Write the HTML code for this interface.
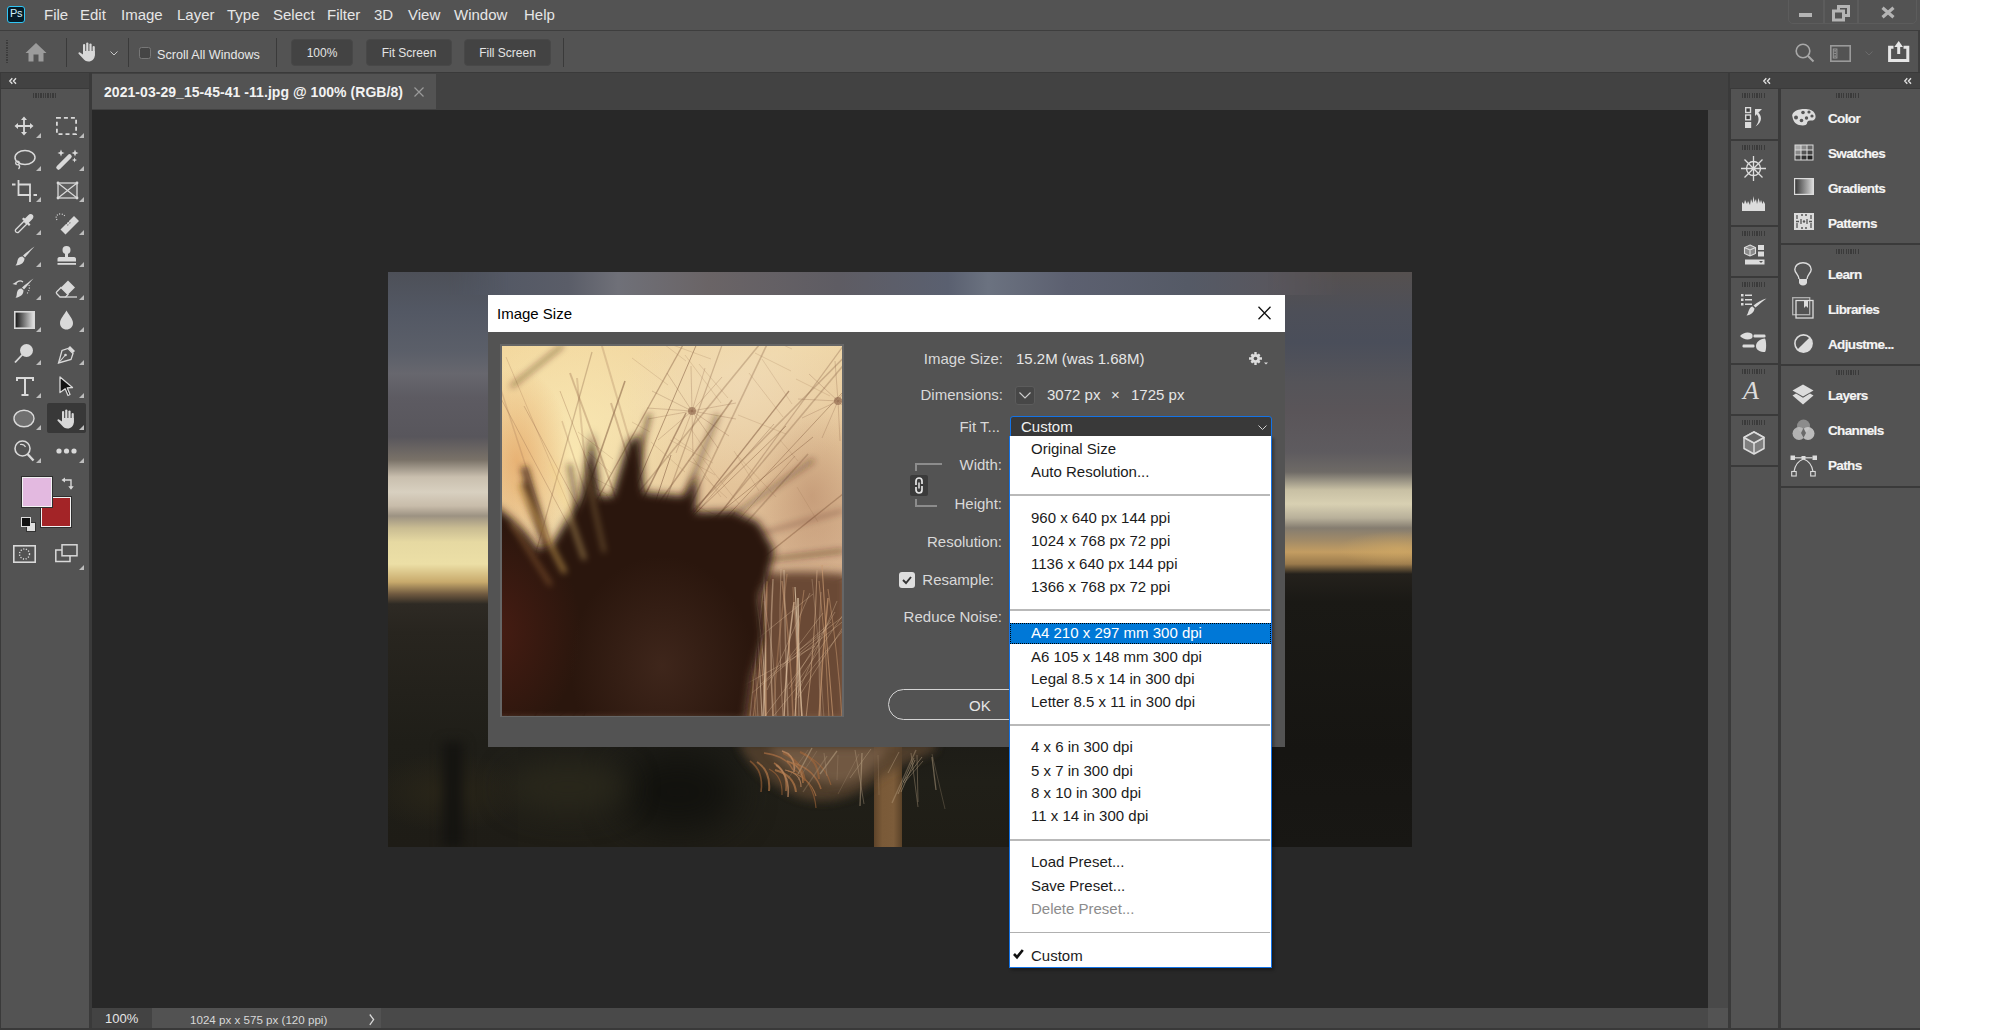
<!DOCTYPE html>
<html><head><meta charset="utf-8">
<style>
*{margin:0;padding:0;box-sizing:border-box}
html,body{width:2000px;height:1030px;overflow:hidden;background:#fff;font-family:"Liberation Sans",sans-serif}
.a{position:absolute}
#app{position:absolute;left:0;top:0;width:1920px;height:1030px;background:#535353;overflow:hidden}
.mi{position:absolute;top:6px;font-size:15px;color:#e6e6e6;line-height:18px}
.sep{position:absolute;width:1px;background:#3a3a3a}
.btn{position:absolute;top:39px;height:27px;border:1px solid #3b3b3b;border-radius:4px;background:#434343;color:#e4e4e4;font-size:12px;line-height:23px;padding-top:1.5px;text-align:center;border-color:#484848}
.grip{position:absolute;height:5px;background:repeating-linear-gradient(90deg,#3a3a3a 0 1.3px,transparent 1.3px 2.4px)}
svg{position:absolute;overflow:visible}
.pl{position:absolute;font-size:13.5px;font-weight:bold;color:#f4f4f4;line-height:16px;letter-spacing:-0.65px;margin-top:0.6px;-webkit-text-stroke:0.15px #f4f4f4}
.dl{position:absolute;font-size:15px;color:#dcdcdc;line-height:18px;text-align:right}
.li{position:absolute;left:21px;font-size:15px;color:#1a1a1a;line-height:18px}
.hr{position:absolute;left:0;width:259px;height:3px;background:#c6c6c6}
</style></head><body>
<svg width="0" height="0" style="position:absolute"><defs>
<g id="hand"><rect x="5" y="2" width="2.2" height="11" rx="1.1" fill="#d8d8d8"/><rect x="8.2" y="0.5" width="2.2" height="12" rx="1.1" fill="#d8d8d8"/><rect x="11.4" y="1.5" width="2.2" height="11" rx="1.1" fill="#d8d8d8"/><rect x="14.6" y="4" width="2.2" height="10" rx="1.1" fill="#d8d8d8"/><path d="M5 9 H16.8 V13 C16.8 17 14 19.5 10.5 19.5 C8 19.5 6.5 18.3 5 16.5 L0.6 11.8 C0 11 1 9.8 2 10.5 L5 12.5 Z" fill="#d8d8d8"/></g>
</defs></svg>
<div id="app">
<!-- menubar -->
<div class="a" style="left:0;top:0;width:1920px;height:30px;background:#535353"></div>
<div class="a" style="left:0;top:30px;width:1920px;height:1px;background:#3e3e3e"></div>
<div class="a" style="left:7px;top:5.5px;width:18px;height:17px;border:1.8px solid #30c6f6;border-radius:3px;background:#061c28;color:#d2f0fc;font-size:11px;line-height:13px;text-align:center;letter-spacing:-0.3px">Ps</div>
<div class="mi" style="left:44px">File</div>
<div class="mi" style="left:80px">Edit</div>
<div class="mi" style="left:121px">Image</div>
<div class="mi" style="left:177px">Layer</div>
<div class="mi" style="left:227px">Type</div>
<div class="mi" style="left:273px">Select</div>
<div class="mi" style="left:327px">Filter</div>
<div class="mi" style="left:374px">3D</div>
<div class="mi" style="left:408px">View</div>
<div class="mi" style="left:454px">Window</div>
<div class="mi" style="left:524px">Help</div>

<!-- options bar -->
<div class="a" style="left:6px;top:40px;width:2px;height:24px;background:repeating-linear-gradient(180deg,#3c3c3c 0 1.4px,transparent 1.4px 2.4px)"></div>
<svg style="left:25px;top:43px" width="22" height="20" viewBox="0 0 22 20"><path d="M11 0 L21.5 10 L18.5 10 L18.5 18.5 L13.5 18.5 L13.5 11.5 L8.5 11.5 L8.5 18.5 L3.5 18.5 L3.5 10 L0.5 10 Z" fill="#9b9b9b"/></svg>
<div class="sep" style="left:66px;top:48px;height:29px;top:38px"></div>
<svg style="left:78px;top:42px" width="19" height="20" viewBox="0 0 19 20"><use href="#hand"/></svg>
<svg style="left:110px;top:51px" width="8" height="5" viewBox="0 0 8 5"><path d="M0.5 0.5 L4 4 L7.5 0.5" stroke="#c8c8c8" stroke-width="1" fill="none"/></svg>
<div class="sep" style="left:128px;top:38px;height:29px"></div>
<div class="a" style="left:139px;top:47px;width:12px;height:12px;border:1px solid #777;border-radius:2.5px;background:#454545"></div>
<div class="a" style="left:157px;top:46.5px;font-size:12.6px;color:#e8e8e8;line-height:16px">Scroll All Windows</div>
<div class="sep" style="left:276px;top:38px;height:29px"></div>
<div class="btn" style="left:291px;width:62px">100%</div>
<div class="btn" style="left:366px;width:86px">Fit Screen</div>
<div class="btn" style="left:464px;width:87px">Fill Screen</div>
<div class="sep" style="left:563px;top:38px;height:29px"></div>
<svg style="left:1795px;top:43px" width="20" height="20" viewBox="0 0 20 20"><circle cx="8" cy="8" r="6.8" stroke="#a8a8a8" stroke-width="1.6" fill="none"/><path d="M13 13 L18.5 18.5" stroke="#a8a8a8" stroke-width="2"/></svg>
<svg style="left:1830px;top:45px" width="21" height="17" viewBox="0 0 21 17"><rect x="0.8" y="0.8" width="19.4" height="15.4" stroke="#9a9a9a" stroke-width="1.6" fill="none"/><rect x="3.3" y="4" width="3.6" height="9" stroke="#9a9a9a" stroke-width="1" fill="none"/><rect x="4.3" y="5.2" width="1.6" height="1.4" fill="#9a9a9a"/><rect x="4.3" y="7.8" width="1.6" height="1.4" fill="#9a9a9a"/><rect x="4.3" y="10.4" width="1.6" height="1.4" fill="#9a9a9a"/></svg>
<svg style="left:1865px;top:51px" width="8" height="5" viewBox="0 0 8 5"><path d="M0.5 0.5 L4 4 L7.5 0.5" stroke="#6a6a6a" stroke-width="1" fill="none"/></svg>
<svg style="left:1888px;top:40px" width="22" height="23" viewBox="0 0 22 23"><path d="M5.5 7.3 H1.6 V20.6 H19.8 V7.3 H15.5" stroke="#e6e6e6" stroke-width="3" fill="none"/><path d="M10.7 6 V14" stroke="#e6e6e6" stroke-width="3"/><path d="M6.3 7 L10.7 1 L15 7 Z" fill="#e6e6e6"/></svg>
<div class="a" style="left:1918px;top:31px;width:2px;height:42px;background:#3e3e3e"></div>
<!-- window controls -->
<div class="a" style="left:1788px;top:-3px;width:129px;height:26.5px;border:1.5px solid #5c5c5c;border-radius:0 0 5px 5px"></div>
<div class="a" style="left:1823px;top:0;width:1.5px;height:23px;background:#5c5c5c"></div>
<div class="a" style="left:1857px;top:0;width:1.5px;height:23px;background:#5c5c5c"></div>
<div class="a" style="left:1799px;top:13px;width:13px;height:4px;background:#b4b4b4"></div>
<svg style="left:1832px;top:5px" width="19" height="16" viewBox="0 0 19 16"><rect x="6.5" y="1.5" width="10" height="9" stroke="#b4b4b4" stroke-width="3" fill="none"/><rect x="1.5" y="6" width="10" height="9" stroke="#b4b4b4" stroke-width="3" fill="#535353"/></svg>
<svg style="left:1881px;top:7px" width="14" height="11" viewBox="0 0 14 11"><path d="M1.5 0.8 L12.5 10.2 M12.5 0.8 L1.5 10.2" stroke="#b4b4b4" stroke-width="3.2"/></svg>

<div class="a" style="left:0;top:72px;width:1920px;height:1px;background:#3a3a3a"></div>

<!-- left toolbar -->
<div class="a" style="left:0;top:73px;width:92px;height:957px;background:#3a3a3a"></div>
<div class="a" style="left:1px;top:73px;width:88px;height:15px;background:#424242"></div>
<div class="a" style="left:1px;top:89px;width:88px;height:941px;background:#535353"></div>


<svg style="left:9px;top:77.5px" width="9" height="6" viewBox="0 0 9 6"><path d="M3.3 0.3 L0.8 3 L3.3 5.7 M7 0.3 L4.5 3 L7 5.7" stroke="#e0e0e0" stroke-width="1.4" fill="none"/></svg>
<div class="grip" style="left:33px;top:93px;width:24px;height:5px"></div>
<!-- row1 move -->
<svg style="left:14px;top:116px" width="20" height="20" viewBox="0 0 20 20"><path d="M10 2 V18 M2 10 H18" stroke="#d9d9d9" stroke-width="1.8"/><path d="M10 0.5 L13 4 H7 Z M10 19.5 L13 16 H7 Z M0.5 10 L4 7 V13 Z M19.5 10 L16 7 V13 Z" fill="#d9d9d9"/></svg>
<svg style="left:56px;top:117px" width="21" height="18" viewBox="0 0 21 18"><rect x="0.9" y="0.9" width="19.2" height="16.2" stroke="#d9d9d9" stroke-width="1.8" fill="none" stroke-dasharray="4 3"/></svg>
<!-- row2 lasso / wand -->
<svg style="left:14px;top:149px" width="22" height="22" viewBox="0 0 22 22"><ellipse cx="11" cy="8.5" rx="10" ry="7" stroke="#d9d9d9" stroke-width="1.5" fill="none"/><circle cx="3.5" cy="14" r="1.8" stroke="#d9d9d9" stroke-width="1.3" fill="none"/><path d="M4.5 15.5 C6 17 5.5 19 4.5 20" stroke="#d9d9d9" stroke-width="1.3" fill="none"/></svg>
<svg style="left:56px;top:148px" width="24" height="22" viewBox="0 0 24 22"><path d="M2.5 19.5 L13.5 8.5" stroke="#d9d9d9" stroke-width="4.5" stroke-linecap="round"/><path d="M5 1.5 L6 4 L8.5 5 L6 6 L5 8.5 L4 6 L1.5 5 L4 4 Z M19 1.5 L20 4 L22.5 5 L20 6 L19 8.5 L18 6 L15.5 5 L18 4 Z M18.5 9.5 L19.2 11.3 L21 12 L19.2 12.7 L18.5 14.5 L17.8 12.7 L16 12 L17.8 11.3 Z" fill="#d9d9d9"/></svg>
<!-- row3 crop / frame -->
<svg style="left:12px;top:180px" width="25" height="22" viewBox="0 0 25 22"><path d="M6.5 0 V15 H19 M0 4.5 H3.5 M6.5 4.5 H18 V22 M21.5 15 H25" stroke="#d9d9d9" stroke-width="1.8" fill="none"/></svg>
<svg style="left:56px;top:181px" width="23" height="19" viewBox="0 0 23 19"><rect x="2" y="2" width="19" height="15" stroke="#d9d9d9" stroke-width="1.3" fill="#5e5e5e"/><path d="M2 2 L21 17 M21 2 L2 17" stroke="#d9d9d9" stroke-width="1.2"/><circle cx="2" cy="2" r="1.4" fill="#d9d9d9"/><circle cx="21" cy="2" r="1.4" fill="#d9d9d9"/><circle cx="2" cy="17" r="1.4" fill="#d9d9d9"/><circle cx="21" cy="17" r="1.4" fill="#d9d9d9"/></svg>
<!-- row4 eyedropper / healing -->
<svg style="left:14px;top:213px" width="21" height="21" viewBox="0 0 21 21"><path d="M2 19 C1 18 1.2 17 2 16.2 L10 8.2 L12.8 11 L4.8 19 C4 19.8 3 19.8 2 19 Z" stroke="#d9d9d9" stroke-width="1.3" fill="none"/><path d="M8 6 L15 13 L16.5 11.5 L14.8 9.8 L18 6.6 C19.8 4.8 19.8 2.8 18.6 1.8 C17.4 0.6 15.6 0.8 14 2.4 L11 5.4 L9.5 4.5 Z" fill="#d9d9d9"/></svg>
<svg style="left:55px;top:213px" width="24" height="21" viewBox="0 0 24 21"><path d="M8 19 L21.5 5.5" stroke="#d9d9d9" stroke-width="7"/><path d="M11 10 L14 13 M13 8 L16 11 M12 7.5 h0" stroke="#555" stroke-width="1.2" stroke-dasharray="1 1.2"/><path d="M2 7 C0 4 2 0.5 6 1 C8 1.2 9 2 10 3" stroke="#d9d9d9" stroke-width="1.2" fill="none" stroke-dasharray="1 1.5"/></svg>
<!-- row5 brush / stamp -->
<svg style="left:15px;top:246px" width="20" height="20" viewBox="0 0 20 20"><path d="M19.5 0.5 C17 3 13 8 10 11.5 L8 9.5 C11.5 6.5 16.5 2.5 19.5 0.5 Z" fill="#d9d9d9"/><path d="M7.5 10.5 L9.5 12.5 C9.5 16 7 19 0.5 19.5 C2 18 2 16.5 2.5 14.5 C3 12 5 10.5 7.5 10.5 Z" fill="#d9d9d9"/></svg>
<svg style="left:57px;top:246px" width="20" height="20" viewBox="0 0 20 20"><circle cx="9.5" cy="4" r="4" fill="#d9d9d9"/><path d="M8 6 H11 V11 H17 C18.5 11 19 12 19 13 V15.5 H0.5 V13 C0.5 12 1 11 2.5 11 H8 Z" fill="#d9d9d9"/><rect x="0.5" y="17" width="18.5" height="1.8" fill="#d9d9d9"/></svg>
<!-- row6 history brush / eraser -->
<svg style="left:12px;top:278px" width="22" height="21" viewBox="0 0 22 21"><path d="M21.5 0.5 C19 3 15 8 12 11.5 L10 9.5 C13.5 6.5 18.5 2.5 21.5 0.5 Z" fill="#d9d9d9"/><path d="M9.5 10.5 L11.5 12.5 C11.5 16 9 19 3.5 19.8 C5 18 4.5 16.5 5 14.5 C5.5 12 7 10.5 9.5 10.5 Z" fill="#d9d9d9"/><path d="M0.5 6 L5 3.5 L4.5 7 Z" fill="#d9d9d9"/><path d="M4 5 C6 3 9 2.5 11 4" stroke="#d9d9d9" stroke-width="1.2" fill="none"/><path d="M17 7 C18 10 17 14 14 16.5" stroke="#d9d9d9" stroke-width="1.2" fill="none" stroke-dasharray="1 1.6"/></svg>
<svg style="left:56px;top:280px" width="22" height="19" viewBox="0 0 22 19"><path d="M12 0.5 L19 7.5 L12 14.5 L5 7.5 Z" fill="#d9d9d9"/><path d="M5 7.5 L12 14.5 L9.5 17 H4 L0.8 13.8 C0.2 13.2 0.2 12.3 0.8 11.7 Z" stroke="#d9d9d9" stroke-width="1.3" fill="none"/><path d="M9.5 17 H21" stroke="#d9d9d9" stroke-width="1.3"/></svg>
<!-- row7 gradient / drop -->
<svg style="left:14px;top:311px" width="21" height="18" viewBox="0 0 21 18"><defs><linearGradient id="gg" x1="0" x2="1"><stop offset="0" stop-color="#111"/><stop offset="1" stop-color="#e8e8e8"/></linearGradient></defs><rect x="0.8" y="0.8" width="19.4" height="16.4" fill="url(#gg)" stroke="#d9d9d9" stroke-width="1.6"/></svg>
<svg style="left:59px;top:310px" width="15" height="20" viewBox="0 0 15 20"><path d="M7.5 0.5 C9 4 14 8.5 14 13 C14 17 11 19.5 7.5 19.5 C4 19.5 1 17 1 13 C1 8.5 6 4 7.5 0.5 Z" fill="#d9d9d9"/></svg>
<!-- row8 dodge / pen -->
<svg style="left:14px;top:344px" width="20" height="20" viewBox="0 0 20 20"><circle cx="12.5" cy="6.5" r="6.5" fill="#d9d9d9"/><path d="M8.5 10.5 L1 18.5" stroke="#d9d9d9" stroke-width="1.8"/></svg>
<svg style="left:57px;top:345px" width="19" height="19" viewBox="0 0 19 19"><path d="M13 1 L18 6 L16 8 L11 3 Z" fill="#d9d9d9"/><path d="M11 3.5 L16 8.5 L14 14.5 L1.5 18 L5 5.5 Z" stroke="#d9d9d9" stroke-width="1.3" fill="none"/><path d="M1.5 18 L8 10.5" stroke="#d9d9d9" stroke-width="1.1"/><circle cx="8.5" cy="10" r="1.3" fill="#d9d9d9"/></svg>
<!-- row9 type / path select -->
<svg style="left:16px;top:377px" width="18" height="19" viewBox="0 0 18 19"><path d="M1 4 V1 H17 V4 M9 1 V18 M5.5 18 H12.5" stroke="#d9d9d9" stroke-width="2" fill="none"/></svg>
<svg style="left:59px;top:376px" width="15" height="21" viewBox="0 0 15 21"><path d="M1 1 L13.5 11.5 L8.2 11.8 L11 18.5 L9 19.5 L6.2 12.8 L1 16.5 Z" fill="#111" stroke="#d9d9d9" stroke-width="1.3" stroke-linejoin="round"/></svg>
<!-- row10 ellipse / hand -->
<svg style="left:13px;top:409px" width="22" height="19" viewBox="0 0 22 19"><ellipse cx="11" cy="9.5" rx="10" ry="8.3" fill="#707070" stroke="#d9d9d9" stroke-width="1.4"/></svg>
<div class="a" style="left:47px;top:403px;width:39px;height:30px;background:#383838;border-radius:2px"></div>
<svg style="left:57px;top:409px" width="19" height="20" viewBox="0 0 19 20"><use href="#hand"/></svg>
<!-- row11 zoom / more -->
<svg style="left:14px;top:440px" width="21" height="22" viewBox="0 0 21 22"><circle cx="8.5" cy="8.5" r="7.5" stroke="#d9d9d9" stroke-width="1.6" fill="none"/><path d="M6 4.5 C8 4 10.5 5 11.5 7" stroke="#d9d9d9" stroke-width="1.2" fill="none"/><path d="M13.5 14 L19.5 20.5" stroke="#d9d9d9" stroke-width="2.4"/></svg>
<svg style="left:56px;top:448px" width="21" height="6" viewBox="0 0 21 6"><circle cx="3" cy="3" r="2.6" fill="#d9d9d9"/><circle cx="10.5" cy="3" r="2.6" fill="#d9d9d9"/><circle cx="18" cy="3" r="2.6" fill="#d9d9d9"/></svg>
<!-- colors -->
<div class="a" style="left:41px;top:497px;width:30px;height:30px;background:#a32427;border:1px solid #f2f2f2;outline:1px solid #2e2e2e"></div>
<div class="a" style="left:22px;top:477px;width:30px;height:30px;background:#e3b9e0;border:1px solid #f2f2f2;outline:1px solid #2e2e2e"></div>
<svg style="left:61px;top:477px" width="14" height="13" viewBox="0 0 14 13"><path d="M3 3 H10 V11" stroke="#d9d9d9" stroke-width="1.4" fill="none"/><path d="M0.5 3 L4 0.5 V5.5 Z M10 12.8 L7.3 9.3 H12.7 Z" fill="#d9d9d9"/></svg>
<div class="a" style="left:27px;top:523px;width:8px;height:8px;background:#dedede;outline:1px solid #333"></div>
<div class="a" style="left:22px;top:518px;width:8px;height:8px;background:#111;outline:1px solid #ddd"></div>
<svg style="left:13px;top:545px" width="23" height="18" viewBox="0 0 23 18"><rect x="0.8" y="0.8" width="21.4" height="16.4" stroke="#d9d9d9" stroke-width="1.6" fill="none"/><circle cx="11.5" cy="9" r="5" stroke="#d9d9d9" stroke-width="1.4" fill="none" stroke-dasharray="1.2 1.5"/></svg>
<svg style="left:55px;top:544px" width="23" height="19" viewBox="0 0 23 19"><rect x="7" y="0.8" width="15" height="11" stroke="#d9d9d9" stroke-width="1.5" fill="none"/><path d="M7 6 H0.8 V17.5 H15 V11.8" stroke="#d9d9d9" stroke-width="1.5" fill="none"/></svg>
<svg style="left:36px;top:133px" width="5" height="5" viewBox="0 0 5 5"><path d="M5 0 V5 H0 Z" fill="#bdbdbd"/></svg><svg style="left:36px;top:166px" width="5" height="5" viewBox="0 0 5 5"><path d="M5 0 V5 H0 Z" fill="#bdbdbd"/></svg><svg style="left:36px;top:197px" width="5" height="5" viewBox="0 0 5 5"><path d="M5 0 V5 H0 Z" fill="#bdbdbd"/></svg><svg style="left:36px;top:230px" width="5" height="5" viewBox="0 0 5 5"><path d="M5 0 V5 H0 Z" fill="#bdbdbd"/></svg><svg style="left:36px;top:262px" width="5" height="5" viewBox="0 0 5 5"><path d="M5 0 V5 H0 Z" fill="#bdbdbd"/></svg><svg style="left:36px;top:295px" width="5" height="5" viewBox="0 0 5 5"><path d="M5 0 V5 H0 Z" fill="#bdbdbd"/></svg><svg style="left:36px;top:327px" width="5" height="5" viewBox="0 0 5 5"><path d="M5 0 V5 H0 Z" fill="#bdbdbd"/></svg><svg style="left:36px;top:360px" width="5" height="5" viewBox="0 0 5 5"><path d="M5 0 V5 H0 Z" fill="#bdbdbd"/></svg><svg style="left:36px;top:393px" width="5" height="5" viewBox="0 0 5 5"><path d="M5 0 V5 H0 Z" fill="#bdbdbd"/></svg><svg style="left:36px;top:425px" width="5" height="5" viewBox="0 0 5 5"><path d="M5 0 V5 H0 Z" fill="#bdbdbd"/></svg><svg style="left:36px;top:458px" width="5" height="5" viewBox="0 0 5 5"><path d="M5 0 V5 H0 Z" fill="#bdbdbd"/></svg><svg style="left:79px;top:133px" width="5" height="5" viewBox="0 0 5 5"><path d="M5 0 V5 H0 Z" fill="#bdbdbd"/></svg><svg style="left:79px;top:166px" width="5" height="5" viewBox="0 0 5 5"><path d="M5 0 V5 H0 Z" fill="#bdbdbd"/></svg><svg style="left:79px;top:197px" width="5" height="5" viewBox="0 0 5 5"><path d="M5 0 V5 H0 Z" fill="#bdbdbd"/></svg><svg style="left:79px;top:230px" width="5" height="5" viewBox="0 0 5 5"><path d="M5 0 V5 H0 Z" fill="#bdbdbd"/></svg><svg style="left:79px;top:262px" width="5" height="5" viewBox="0 0 5 5"><path d="M5 0 V5 H0 Z" fill="#bdbdbd"/></svg><svg style="left:79px;top:295px" width="5" height="5" viewBox="0 0 5 5"><path d="M5 0 V5 H0 Z" fill="#bdbdbd"/></svg><svg style="left:79px;top:327px" width="5" height="5" viewBox="0 0 5 5"><path d="M5 0 V5 H0 Z" fill="#bdbdbd"/></svg><svg style="left:79px;top:360px" width="5" height="5" viewBox="0 0 5 5"><path d="M5 0 V5 H0 Z" fill="#bdbdbd"/></svg><svg style="left:79px;top:393px" width="5" height="5" viewBox="0 0 5 5"><path d="M5 0 V5 H0 Z" fill="#bdbdbd"/></svg><svg style="left:79px;top:425px" width="5" height="5" viewBox="0 0 5 5"><path d="M5 0 V5 H0 Z" fill="#bdbdbd"/></svg><svg style="left:79px;top:458px" width="5" height="5" viewBox="0 0 5 5"><path d="M5 0 V5 H0 Z" fill="#bdbdbd"/></svg><svg style="left:79px;top:565px" width="5" height="5" viewBox="0 0 5 5"><path d="M5 0 V5 H0 Z" fill="#bdbdbd"/></svg>
<!-- document area -->
<div class="a" style="left:92px;top:73px;width:1636px;height:37px;background:#424242"></div>
<div class="a" style="left:92px;top:74px;width:344px;height:35px;background:#535353"></div>
<div class="a" style="left:92px;top:110px;width:1616px;height:898px;background:#282828"></div>
<div class="a" style="left:1708px;top:110px;width:20px;height:920px;background:#494949"></div>
<div class="a" style="left:92px;top:1008px;width:1616px;height:22px;background:#494949"></div><div class="a" style="left:1708px;top:1008px;width:20px;height:20px;background:#535353"></div>


<div class="a" style="left:104px;top:84px;font-size:14px;font-weight:bold;color:#f2f2f2;line-height:17px;letter-spacing:0.05px">2021-03-29_15-45-41 -11.jpg @ 100% (RGB/8)</div>
<svg style="left:414px;top:87px" width="10" height="10" viewBox="0 0 10 10"><path d="M0.5 0.5 L9.5 9.5 M9.5 0.5 L0.5 9.5" stroke="#9a9a9a" stroke-width="1.2"/></svg>
<div class="a" style="left:92px;top:1008px;width:60px;height:20px;background:#434343"></div>
<div class="a" style="left:105px;top:1010.5px;font-size:13px;color:#e6e6e6;line-height:16px">100%</div>
<div class="a" style="left:152px;top:1008px;width:229px;height:20px;background:#525252"></div>
<div class="a" style="left:190px;top:1012px;font-size:11.6px;color:#d8d8d8;line-height:15px">1024 px x 575 px (120 ppi)</div>
<svg style="left:369px;top:1014px" width="6" height="12" viewBox="0 0 6 12"><path d="M0.8 0.5 L4.6 5.6 L0.8 10.8" stroke="#d8d8d8" stroke-width="1.3" fill="none"/></svg>

<!-- right dock -->
<div class="a" style="left:1728px;top:73px;width:192px;height:957px;background:#3a3a3a"></div>
<div class="a" style="left:1730px;top:73px;width:190px;height:15px;background:#424242"></div>
<div class="a" style="left:1731px;top:89px;width:47px;height:941px;background:#535353"></div>
<div class="a" style="left:1781px;top:89px;width:139px;height:941px;background:#535353"></div>


<svg style="left:1763px;top:77.5px" width="9" height="6" viewBox="0 0 9 6"><path d="M3.3 0.3 L0.8 3 L3.3 5.7 M7 0.3 L4.5 3 L7 5.7" stroke="#e0e0e0" stroke-width="1.4" fill="none"/></svg>
<svg style="left:1904px;top:77.5px" width="9" height="6" viewBox="0 0 9 6"><path d="M3.3 0.3 L0.8 3 L3.3 5.7 M7 0.3 L4.5 3 L7 5.7" stroke="#e0e0e0" stroke-width="1.4" fill="none"/></svg>
<!-- icon column separators -->
<div class="a" style="left:1731px;top:139px;width:47px;height:2px;background:#3a3a3a"></div>
<div class="a" style="left:1731px;top:225px;width:47px;height:2px;background:#3a3a3a"></div>
<div class="a" style="left:1731px;top:276px;width:47px;height:2px;background:#3a3a3a"></div>
<div class="a" style="left:1731px;top:363px;width:47px;height:2px;background:#3a3a3a"></div>
<div class="a" style="left:1731px;top:414px;width:47px;height:2px;background:#3a3a3a"></div>
<div class="a" style="left:1731px;top:465px;width:47px;height:2px;background:#3a3a3a"></div>
<div class="grip" style="left:1742px;top:93px;width:24px;height:5px"></div>
<div class="grip" style="left:1742px;top:145px;width:24px;height:5px"></div>
<div class="grip" style="left:1742px;top:231px;width:24px;height:5px"></div>
<div class="grip" style="left:1742px;top:282px;width:24px;height:5px"></div>
<div class="grip" style="left:1742px;top:369px;width:24px;height:5px"></div>
<div class="grip" style="left:1742px;top:420px;width:24px;height:5px"></div>
<!-- wide panel separators -->
<div class="a" style="left:1781px;top:243px;width:139px;height:2px;background:#3a3a3a"></div>
<div class="a" style="left:1781px;top:364px;width:139px;height:2px;background:#3a3a3a"></div>
<div class="a" style="left:1781px;top:486px;width:139px;height:2px;background:#3a3a3a"></div>
<div class="grip" style="left:1836px;top:93px;width:24px;height:5px"></div>
<div class="grip" style="left:1836px;top:249px;width:24px;height:5px"></div>
<div class="grip" style="left:1836px;top:370px;width:24px;height:5px"></div>
<div class="pl" style="left:1828px;top:110px">Color</div>
<div class="pl" style="left:1828px;top:145px">Swatches</div>
<div class="pl" style="left:1828px;top:180px">Gradients</div>
<div class="pl" style="left:1828px;top:215px">Patterns</div>
<div class="pl" style="left:1828px;top:266px">Learn</div>
<div class="pl" style="left:1828px;top:301px">Libraries</div>
<div class="pl" style="left:1828px;top:336px">Adjustme...</div>
<div class="pl" style="left:1828px;top:387px">Layers</div>
<div class="pl" style="left:1828px;top:422px">Channels</div>
<div class="pl" style="left:1828px;top:457px">Paths</div>


<!-- icon column icons -->
<svg style="left:1745px;top:107px" width="19" height="21" viewBox="0 0 19 21"><rect x="0.7" y="0.7" width="4.8" height="4.8" stroke="#dcdcdc" stroke-width="1.4" fill="#3e3e3e"/><rect x="0.7" y="8" width="4.8" height="4.8" stroke="#dcdcdc" stroke-width="1.4" fill="#3e3e3e"/><rect x="0" y="15" width="6.2" height="6" fill="#dcdcdc"/><path d="M10 2 L17 2 L10 9 Z" fill="#dcdcdc"/><path d="M12.5 5 C17 8 18 15 10.5 19.5 C14.5 15 14.5 9.5 11 6.5 Z" fill="#dcdcdc"/></svg>
<svg style="left:1741px;top:156px" width="25" height="25" viewBox="0 0 25 25"><circle cx="12.5" cy="12.5" r="7" stroke="#dcdcdc" stroke-width="1.4" fill="none"/><path d="M12.5 0 V25 M0 12.5 H25 M3.5 3.5 L21.5 21.5 M21.5 3.5 L3.5 21.5" stroke="#dcdcdc" stroke-width="1.3"/></svg>
<svg style="left:1742px;top:196px" width="23" height="15" viewBox="0 0 23 15"><path d="M0 15 V6 L2 8 L3 4 L5 8 L6 5 L8 9 L9 3 L10.5 7 L11.5 0 L12.5 6 L14 3 L15 8 L16.5 2 L18 7 L19 4 L20.5 8 L21.5 5 L23 8 V15 Z" fill="#dcdcdc"/></svg>
<svg style="left:1744px;top:244px" width="21" height="21" viewBox="0 0 21 21"><path d="M6 1 L11.5 3.5 V9.5 L6 12 L0.5 9.5 V3.5 Z" fill="#8a8a8a" stroke="#dcdcdc" stroke-width="1.1"/><path d="M0.5 3.5 L6 6 L11.5 3.5 M6 6 V12" stroke="#dcdcdc" stroke-width="1.1" fill="none"/><rect x="14" y="1" width="6" height="5" fill="#dcdcdc"/><rect x="14" y="7.5" width="6" height="5" fill="#dcdcdc"/><rect x="1" y="15.5" width="19.5" height="5" fill="#dcdcdc"/><path d="M15 17 H19 L17 19 Z" fill="#555"/></svg>
<svg style="left:1741px;top:294px" width="26" height="22" viewBox="0 0 26 22"><rect x="0" y="0" width="2.5" height="2.5" fill="#dcdcdc"/><rect x="4" y="0.5" width="7" height="1.5" fill="#dcdcdc"/><rect x="0" y="4.5" width="2.5" height="2.5" fill="#dcdcdc"/><rect x="4" y="5" width="7" height="1.5" fill="#dcdcdc"/><rect x="0" y="9" width="2.5" height="2.5" fill="#dcdcdc"/><rect x="4" y="9.5" width="7" height="1.5" fill="#dcdcdc"/><path d="M25.5 4.5 C22 7 18 10.5 14.5 13.5 L12.5 11.5 C16 8.5 21.5 5.5 25.5 4.5 Z" fill="#dcdcdc"/><path d="M11.5 12.5 L13.5 14.5 C13 18.5 10 21 5.5 21.5 C7 20 7 18 8 16 C9 14 10 12.5 11.5 12.5 Z" fill="#dcdcdc"/></svg>
<svg style="left:1740px;top:331px" width="27" height="21" viewBox="0 0 27 21"><path d="M0 5 C3 1.5 8 0.5 11.5 2.5 C13 3.5 13 6.5 11.5 7.5 C8 9.5 3 8.5 0 5 Z" fill="#dcdcdc"/><rect x="13.5" y="3.5" width="12" height="3" rx="1.2" fill="#dcdcdc"/><rect x="2.5" y="13.5" width="12" height="3" rx="1.2" fill="#dcdcdc"/><path d="M16 15 C16 11 20 8 25 7.5 C26.5 10 26.5 19 25 21 C20 21 16 19 16 15 Z" fill="#dcdcdc"/></svg>
<div class="a" style="left:1743px;top:378px;font-family:'Liberation Serif',serif;font-style:italic;font-size:26px;color:#dcdcdc;line-height:26px">A</div>
<svg style="left:1743px;top:431px" width="22" height="24" viewBox="0 0 22 24"><path d="M11 1 L21 6.5 V17.5 L11 23 L1 17.5 V6.5 Z" fill="#7e7e7e" stroke="#dcdcdc" stroke-width="1.5" stroke-linejoin="round"/><path d="M1 6.5 L11 12 L21 6.5 M11 12 V23" stroke="#dcdcdc" stroke-width="1.5" fill="none"/><path d="M11 1 L21 6.5 L11 12 L1 6.5 Z" fill="#666"/><path d="M1 6.5 L11 1 L21 6.5 L11 12 Z" stroke="#dcdcdc" stroke-width="1.5" fill="none" stroke-linejoin="round"/></svg>
<!-- wide panel icons -->
<svg style="left:1791px;top:108px" width="25" height="18" viewBox="0 0 25 18"><path d="M1.5 9 C0 5 5 2 9 1.5 C14 0.5 22 1 24 6 C25.5 9.5 24 13 20 12.5 C17 12 16 14 16 15.5 C15.5 17.5 12 18 8 17 C4 16 2 12.5 1.5 9 Z" fill="#dcdcdc"/><circle cx="5" cy="9.5" r="2" fill="#555"/><circle cx="10.5" cy="12.5" r="1.8" fill="#555"/><circle cx="16" cy="11.5" r="0.1" fill="#555"/><circle cx="12" cy="4.5" r="1.8" fill="#555"/><circle cx="18" cy="4" r="1.6" fill="#555"/><circle cx="21" cy="8" r="1.6" fill="#555"/><circle cx="15.5" cy="10" r="1.7" fill="#555"/></svg>
<svg style="left:1794px;top:144px" width="20" height="17" viewBox="0 0 20 17"><rect x="0.5" y="0.5" width="19" height="16" fill="#dcdcdc"/><rect x="1.5" y="1.5" width="5" height="4" fill="#aaa"/><rect x="7.5" y="1.5" width="5" height="4" fill="#888"/><rect x="13.5" y="1.5" width="5" height="4" fill="#666"/><rect x="1.5" y="6.5" width="5" height="4" fill="#888"/><rect x="7.5" y="6.5" width="5" height="4" fill="#555"/><rect x="13.5" y="6.5" width="5" height="4" fill="#444"/><rect x="1.5" y="11.5" width="5" height="4" fill="#444"/><rect x="7.5" y="11.5" width="5" height="4" fill="#333"/><rect x="13.5" y="11.5" width="5" height="4" fill="#222"/></svg>
<svg style="left:1794px;top:178px" width="20" height="17" viewBox="0 0 20 17"><defs><linearGradient id="g2" x1="0" x2="1"><stop offset="0" stop-color="#333"/><stop offset="1" stop-color="#ddd"/></linearGradient></defs><rect x="0.6" y="0.6" width="18.8" height="15.8" fill="url(#g2)" stroke="#dcdcdc" stroke-width="1.2"/></svg>
<svg style="left:1794px;top:213px" width="20" height="17" viewBox="0 0 20 17"><rect x="0" y="0" width="20" height="17" fill="#dcdcdc"/><path d="M3 2 V6 M3 10 V15 M7 2 H9 M11 2 H13 M7 15 H9 M11 15 H13 M17 2 V6 M17 10 V15 M7 6 V11 M13 6 V11 M2 8.5 H5 M15 8.5 H18" stroke="#555" stroke-width="1.3"/><circle cx="10" cy="8.5" r="1.2" fill="#555"/></svg>
<svg style="left:1794px;top:262px" width="18" height="24" viewBox="0 0 18 24"><path d="M5 17 C5 13 0.8 11 0.8 7.5 C0.8 3.5 4.5 0.8 9 0.8 C13.5 0.8 17.2 3.5 17.2 7.5 C17.2 11 13 13 13 17" stroke="#dcdcdc" stroke-width="1.4" fill="none"/><path d="M5 17 H13 V20.5 C13 22 11.5 23.5 9 23.5 C6.5 23.5 5 22 5 20.5 Z" fill="#dcdcdc"/></svg>
<svg style="left:1792px;top:297px" width="22" height="22" viewBox="0 0 22 22"><rect x="0.7" y="0.7" width="17" height="17" stroke="#dcdcdc" stroke-width="1.3" fill="none" opacity="0.7"/><rect x="4" y="3.5" width="17" height="17.5" stroke="#dcdcdc" stroke-width="1.3" fill="none"/><path d="M12 4 V11 L14 9 L16 11 V4" fill="#dcdcdc"/></svg>
<svg style="left:1794px;top:334px" width="19" height="19" viewBox="0 0 19 19"><circle cx="9.5" cy="9.5" r="8.6" stroke="#dcdcdc" stroke-width="1.6" fill="none"/><path d="M15.6 3.4 A8.6 8.6 0 0 1 3.4 15.6 Z" fill="#dcdcdc"/></svg>
<svg style="left:1792px;top:384px" width="22" height="21" viewBox="0 0 22 21"><path d="M11 0.5 L21.5 6.5 L11 12.5 L0.5 6.5 Z" fill="#dcdcdc"/><path d="M0.5 11.5 L4 9.5 L11 13.8 L18 9.5 L21.5 11.5 L11 20.5 Z" fill="#dcdcdc"/></svg>
<svg style="left:1792px;top:419px" width="23" height="22" viewBox="0 0 23 22"><circle cx="11.5" cy="7" r="6.5" fill="#8c8c8c"/><circle cx="7" cy="14.5" r="6.5" fill="#bdbdbd" opacity="0.9"/><circle cx="16" cy="14.5" r="6.5" fill="#cfcfcf" opacity="0.85"/><path d="M11.5 9 L14 14 L11.5 19 L9 14 Z" fill="#6a6a6a"/></svg>
<svg style="left:1790px;top:455px" width="28" height="22" viewBox="0 0 28 22"><rect x="0.5" y="0.5" width="4.5" height="4.5" fill="#dcdcdc"/><rect x="11.5" y="1" width="4" height="3.5" fill="#dcdcdc"/><rect x="22.5" y="0.5" width="4.5" height="4.5" fill="#dcdcdc"/><path d="M5 2.8 H22.5" stroke="#dcdcdc" stroke-width="1.2"/><path d="M13.5 4 C8 6 5 10 4 16.5 M13.5 4 C19 6 22 10 23 16.5" stroke="#dcdcdc" stroke-width="1.2" fill="none"/><rect x="1.7" y="16.5" width="4.5" height="4.5" stroke="#dcdcdc" stroke-width="1.1" fill="none"/><rect x="20.7" y="16.5" width="4.5" height="4.5" stroke="#dcdcdc" stroke-width="1.1" fill="none"/></svg>

<div class="a" style="left:0;top:1028px;width:1920px;height:2px;background:#393939"></div>
<!-- PHOTO -->
<div id="photo" class="a" style="left:388px;top:272px;width:1024px;height:575px;overflow:hidden;background:#1f1d17">
<!-- left strip -->
<div class="a" style="left:0;top:0;width:140px;height:575px;background:linear-gradient(180deg,#4d5058 0px,#535864 40px,#5b5f69 80px,#67676e 102px,#5d5b62 125px,#58565c 165px,#7a7268 188px,#c9bfae 205px,#d8d0c0 220px,#c8bcaa 234px,#9c9282 244px,#c9bc92 256px,#e6d9a2 270px,#ecdfa6 292px,#c8aa6c 310px,#705a40 322px,#2e2a24 332px,#28251f 360px,#23211b 420px,#1f1e18 470px,#1e1c16 575px)"></div>
<!-- right strip -->
<div class="a" style="left:870px;top:0;width:154px;height:575px;background:linear-gradient(180deg,#55504f 0px,#4d4f58 40px,#4a4e5a 70px,#555459 110px,#5a5559 140px,#5e5b5f 180px,#6e6a66 200px,#c8c0a4 218px,#d8d0b2 232px,#b8b09a 246px,#857d70 256px,#a08a68 268px,#c39d62 280px,#9a7a4c 292px,#24211c 302px,#1a1915 330px,#161512 480px,#181714 575px)"></div>
<div class="a" style="left:890px;top:225px;width:134px;height:70px;background:radial-gradient(ellipse 60px 18px at 120px 52px,rgba(210,170,100,0.6),transparent)"></div>
<!-- top strip -->
<div class="a" style="left:0;top:0;width:1024px;height:23px;-webkit-mask-image:linear-gradient(90deg,transparent 60px,#000 120px,#000 880px,transparent 960px);background:linear-gradient(90deg,#4d4c52 0px,#4f5562 60px,#5a5d68 180px,#6f7078 230px,#6a6466 320px,#5e5c63 450px,#5a6070 560px,#6b7280 600px,#5c6070 680px,#555a66 800px,#59565c 900px,#5a5558 1024px)"></div>

<!-- bottom strip -->
<div class="a" style="left:130px;top:470px;width:750px;height:105px;background:linear-gradient(180deg,#1d1c17,#201f18 40px,#1f1d16 105px)"></div>
<div class="a" style="left:0;top:470px;width:140px;height:105px;background:radial-gradient(ellipse 80px 40px at 60px 50px,#2a2619,transparent)"></div>
<div class="a" style="left:55px;top:470px;width:20px;height:105px;background:#141310;filter:blur(6px)"></div>
<div class="a" style="left:230px;top:480px;width:120px;height:80px;background:#12120e;filter:blur(18px);border-radius:50%"></div>
<div class="a" style="left:120px;top:490px;width:120px;height:50px;background:#29271b;filter:blur(15px);border-radius:50%"></div>
<div class="a" style="left:486px;top:475px;width:28px;height:100px;background:linear-gradient(90deg,#5e442a,#7a5a38 30%,#7c5c3a 70%,#5a4228)"></div>
<!-- dandelion fluff -->
<svg style="left:0;top:0" width="1024" height="575" viewBox="0 0 1024 575">
<defs><filter id="fb" filterUnits="userSpaceOnUse" x="250" y="400" width="400" height="200"><feGaussianBlur stdDeviation="5"/></filter>
<filter id="fb1" filterUnits="userSpaceOnUse" x="250" y="400" width="400" height="200"><feGaussianBlur stdDeviation="0.6"/></filter></defs>
<path d="M350 470 C360 495 385 515 410 525 C440 535 470 525 492 505 C515 492 535 485 548 478 L548 470 Z" fill="#56422e" filter="url(#fb)" opacity="0.85"/>
<path d="M380 475 C395 495 420 510 450 512 C475 510 488 495 500 475 Z" fill="#7a6048" filter="url(#fb)" opacity="0.8"/>
<g fill="none" filter="url(#fb1)" opacity="0.7"><path d="M376 481 Q399 484 405 498" stroke="#c07a48" stroke-width="1.6" opacity="0.8"/><path d="M397 498 Q413 501 413 515" stroke="#e0a070" stroke-width="1.2" opacity="0.8"/><path d="M369 490 Q383 499 381 519" stroke="#d08850" stroke-width="2" opacity="0.8"/><path d="M400 499 Q422 505 428 524" stroke="#d08850" stroke-width="1.2" opacity="0.8"/><path d="M395 481 Q414 489 417 509" stroke="#a86838" stroke-width="2" opacity="0.8"/><path d="M415 482 Q437 491 443 513" stroke="#a86838" stroke-width="1.2" opacity="0.8"/><path d="M394 479 Q408 483 406 500" stroke="#e0a070" stroke-width="1.6" opacity="0.8"/><path d="M387 498 Q406 503 408 520" stroke="#d08850" stroke-width="2" opacity="0.8"/><path d="M412 480 Q430 487 431 507" stroke="#a86838" stroke-width="2" opacity="0.8"/><path d="M386 491 Q400 499 398 519" stroke="#d08850" stroke-width="1.6" opacity="0.8"/><path d="M362 489 Q376 499 373 520" stroke="#a86838" stroke-width="1.6" opacity="0.8"/><path d="M406 491 Q427 498 433 517" stroke="#c07a48" stroke-width="1.6" opacity="0.8"/><path d="M388 493 Q402 503 400 525" stroke="#e0a070" stroke-width="1.6" opacity="0.8"/><path d="M407 498 Q426 511 428 536" stroke="#a86838" stroke-width="1.2" opacity="0.8"/><path d="M399 489 Q415 494 415 511" stroke="#d08850" stroke-width="1.6" opacity="0.8"/><path d="M381 497 Q395 504 394 523" stroke="#a86838" stroke-width="1.2" opacity="0.8"/><path d="M527 488 L513 520" stroke="#c8b090" stroke-width="1" opacity="0.65"/><path d="M535 489 L516 511" stroke="#c8b090" stroke-width="0.8" opacity="0.65"/><path d="M450 483 L449 508" stroke="#c8b090" stroke-width="0.8" opacity="0.35"/><path d="M474 481 L472 534" stroke="#c8b090" stroke-width="1.3" opacity="0.65"/><path d="M544 485 L548 518" stroke="#c8b090" stroke-width="1.3" opacity="0.65"/><path d="M471 482 L450 522" stroke="#c8b090" stroke-width="0.8" opacity="0.35"/><path d="M429 479 L410 508" stroke="#c8b090" stroke-width="0.8" opacity="0.35"/><path d="M420 478 L399 508" stroke="#c8b090" stroke-width="0.8" opacity="0.35"/><path d="M534 485 L515 510" stroke="#c8b090" stroke-width="1" opacity="0.65"/><path d="M467 478 L476 532" stroke="#c8b090" stroke-width="1" opacity="0.5"/><path d="M483 477 L462 506" stroke="#c8b090" stroke-width="1" opacity="0.5"/><path d="M528 478 L504 531" stroke="#c8b090" stroke-width="1.3" opacity="0.5"/><path d="M439 484 L415 520" stroke="#c8b090" stroke-width="1.3" opacity="0.35"/><path d="M511 480 L500 501" stroke="#c8b090" stroke-width="0.8" opacity="0.65"/><path d="M490 483 L491 523" stroke="#c8b090" stroke-width="0.8" opacity="0.35"/><path d="M526 486 L510 522" stroke="#c8b090" stroke-width="1" opacity="0.65"/><path d="M424 476 L410 502" stroke="#c8b090" stroke-width="1.3" opacity="0.65"/><path d="M544 482 L557 537" stroke="#c8b090" stroke-width="1" opacity="0.35"/><path d="M449 479 L432 502" stroke="#c8b090" stroke-width="1.3" opacity="0.65"/><path d="M529 483 L530 530" stroke="#c8b090" stroke-width="0.8" opacity="0.65"/><path d="M436 481 L439 504" stroke="#c8b090" stroke-width="0.8" opacity="0.5"/><path d="M523 481 L530 535" stroke="#c8b090" stroke-width="1" opacity="0.5"/></g>
</svg>

</div>

<!-- DIALOG -->
<div id="dlg" class="a" style="left:488px;top:295px;width:797px;height:452px;background:#535353">
  <div class="a" style="left:0;top:0;width:797px;height:37px;background:#fff"></div>
  <div class="a" style="left:9px;top:10px;font-size:15px;color:#000;line-height:18px">Image Size</div>
  <svg style="left:770px;top:11px" width="13" height="14" viewBox="0 0 13 14"><path d="M0.5 0.8 L12.5 13.2 M12.5 0.8 L0.5 13.2" stroke="#111" stroke-width="1.3"/></svg>
  
</div>

<div class="a" style="right:917px;top:349.80px;font-size:15px;line-height:18px;color:#d9d9d9;white-space:nowrap;">Image Size:</div>
<div class="a" style="left:1016px;top:349.80px;font-size:15px;line-height:18px;color:#e6e6e6;white-space:nowrap;">15.2M (was 1.68M)</div>
<svg style="left:1249px;top:352px" width="20" height="14" viewBox="0 0 20 14"><g fill="#dcdcdc"><circle cx="6.5" cy="6.5" r="4.6"/><path d="M5.3 0 h2.4 v2.5 h-2.4z M5.3 10.5 h2.4 v2.5 h-2.4z M0 5.3 v2.4 h2.5 v-2.4z M10.5 5.3 v2.4 h2.5 v-2.4z"/><path d="M1.5 3.2 l1.7-1.7 1.8 1.8 -1.7 1.7z M9.8 11.5 l1.7-1.7 -1.8-1.8 -1.7 1.7z M1.5 9.8 l1.7 1.7 1.8-1.8 -1.7-1.7z M11.5 3.2 l-1.7-1.7 -1.8 1.8 1.7 1.7z"/></g><circle cx="6.5" cy="6.5" r="1.8" fill="#535353"/><path d="M15 10.5 h4 l-2 2z" fill="#dcdcdc"/></svg>
<div class="a" style="right:917px;top:385.80px;font-size:15px;line-height:18px;color:#d9d9d9;white-space:nowrap;">Dimensions:</div>
<div class="a" style="left:1015px;top:386px;width:20px;height:19px;background:#474747;border:1px solid #5c5c5c;border-radius:3px"></div>
<svg style="left:1019px;top:392px" width="12" height="7" viewBox="0 0 12 7"><path d="M0.5 0.5 L6 6 L11.5 0.5" stroke="#cfcfcf" stroke-width="1.1" fill="none"/></svg>
<div class="a" style="left:1047px;top:385.80px;font-size:15px;line-height:18px;color:#e6e6e6;white-space:nowrap">3072 px</div><div class="a" style="left:1111px;top:385.80px;font-size:15px;line-height:18px;color:#e6e6e6">&times;</div><div class="a" style="left:1131px;top:385.80px;font-size:15px;line-height:18px;color:#e6e6e6;white-space:nowrap">1725 px</div>
<div class="a" style="right:920px;top:417.80px;font-size:15px;line-height:18px;color:#d9d9d9;white-space:nowrap;">Fit T...</div>
<div class="a" style="left:1010px;top:416px;width:262px;height:21px;background:#393939;border:1.5px solid #1473e6;border-radius:3px 3px 0 0"></div>
<div class="a" style="left:1021px;top:417.80px;font-size:15px;line-height:18px;color:#f2f2f2;white-space:nowrap;">Custom</div>
<svg style="left:1258px;top:425px" width="9" height="5" viewBox="0 0 9 5"><path d="M0.5 0.5 L4.5 4.5 L8.5 0.5" stroke="#d0d0d0" stroke-width="1" fill="none"/></svg>
<div class="a" style="left:915px;top:463px;width:27px;height:8px;border-top:2px solid #8c8c8c;border-left:2px solid #8c8c8c"></div>
<div class="a" style="left:915px;top:499px;width:22px;height:8px;border-bottom:2px solid #8c8c8c;border-left:2px solid #8c8c8c"></div>
<div class="a" style="left:910px;top:475px;width:18px;height:21px;background:#3b3b3b;border-radius:2px"></div>
<svg style="left:913px;top:476px" width="12" height="19" viewBox="0 0 12 19"><path d="M3 9 V5 A3 3 0 0 1 9 5 V8" stroke="#e6e6e6" stroke-width="1.7" fill="none"/><path d="M9 10 V14 A3 3 0 0 1 3 14 V11" stroke="#e6e6e6" stroke-width="1.7" fill="none"/><path d="M6 6.5 V12.5" stroke="#e6e6e6" stroke-width="1.5"/></svg>
<div class="a" style="right:918px;top:455.80px;font-size:15px;line-height:18px;color:#d9d9d9;white-space:nowrap;">Width:</div>
<div class="a" style="right:918px;top:494.80px;font-size:15px;line-height:18px;color:#d9d9d9;white-space:nowrap;">Height:</div>
<div class="a" style="right:918px;top:532.80px;font-size:15px;line-height:18px;color:#d9d9d9;white-space:nowrap;">Resolution:</div>
<div class="a" style="left:899px;top:572px;width:16px;height:16px;background:#dedede;border-radius:3px"></div>
<svg style="left:902px;top:575px" width="10" height="10" viewBox="0 0 10 10"><path d="M1 5 L4 8 L9 2" stroke="#333" stroke-width="1.9" fill="none"/></svg>
<div class="a" style="right:926px;top:570.80px;font-size:15px;line-height:18px;color:#d9d9d9;white-space:nowrap;">Resample:</div>
<div class="a" style="right:918px;top:607.80px;font-size:15px;line-height:18px;color:#d9d9d9;white-space:nowrap;">Reduce Noise:</div>
<div class="a" style="left:888px;top:689px;width:180px;height:31px;border:1.5px solid #d4d4d4;border-radius:16px"></div>
<div class="a" style="left:969px;top:696.80px;font-size:15px;line-height:18px;color:#e6e6e6;white-space:nowrap;">OK</div>

<div class="a" style="left:500px;top:344px;width:344px;height:373px;background:#666"></div>
<div id="prev" class="a" style="left:502px;top:346px;width:340px;height:370px;overflow:hidden;background:linear-gradient(160deg,#f2d69c 0%,#f0d8a8 22%,#e4c49a 45%,#d8b490 65%,#c8a080 100%)">
<div class="a" style="left:-60px;top:-40px;width:260px;height:300px;background:radial-gradient(ellipse at center,rgba(252,236,180,0.8),rgba(252,236,180,0) 70%)"></div>
<div class="a" style="left:120px;top:-60px;width:240px;height:200px;background:radial-gradient(ellipse at center,rgba(240,220,190,0.55),rgba(240,220,190,0) 70%)"></div>
<div class="a" style="left:250px;top:60px;width:120px;height:180px;background:radial-gradient(ellipse at center,rgba(170,120,90,0.45),rgba(170,120,90,0) 70%)"></div>
<div class="a" style="left:-40px;top:20px;width:110px;height:190px;background:radial-gradient(ellipse at center,rgba(220,140,70,0.55),rgba(220,140,70,0) 70%)"></div>
<svg style="left:0;top:0" width="340" height="370" viewBox="0 0 340 370">
<defs>
<filter id="sb" filterUnits="userSpaceOnUse" x="-50" y="-50" width="440" height="470"><feGaussianBlur stdDeviation="3"/></filter>
<filter id="sb4" filterUnits="userSpaceOnUse" x="-50" y="-50" width="440" height="470"><feGaussianBlur stdDeviation="4.5"/></filter>
<filter id="sb1" filterUnits="userSpaceOnUse" x="-50" y="-50" width="440" height="470"><feGaussianBlur stdDeviation="0.6"/></filter>
</defs>
<g fill="none" filter="url(#sb1)"><path d="M41 367 L400 206" stroke="#7a5238" stroke-width="1.6" opacity="0.5"/><path d="M-6 396 L272 78" stroke="#7a5238" stroke-width="1" opacity="0.3"/><path d="M40 317 L376 -23" stroke="#7a5238" stroke-width="1.6" opacity="0.3"/><path d="M67 348 L354 4" stroke="#7a5238" stroke-width="1.6" opacity="0.3"/><path d="M72 400 L169 109" stroke="#7a5238" stroke-width="1" opacity="0.5"/><path d="M-35 356 L262 -7" stroke="#7a5238" stroke-width="1.6" opacity="0.3"/><path d="M75 360 L381 116" stroke="#7a5238" stroke-width="1.3" opacity="0.4"/><path d="M140 419 L527 207" stroke="#7a5238" stroke-width="1.3" opacity="0.3"/><path d="M52 304 L284 80" stroke="#7a5238" stroke-width="1" opacity="0.4"/><path d="M30 415 L294 272" stroke="#7a5238" stroke-width="1" opacity="0.3"/><path d="M45 418 L233 166" stroke="#7a5238" stroke-width="1.6" opacity="0.3"/><path d="M100 332 L224 -12" stroke="#7a5238" stroke-width="1.3" opacity="0.3"/><path d="M-16 385 L90 6" stroke="#7a5238" stroke-width="1.3" opacity="0.3"/><path d="M83 323 L422 -41" stroke="#7a5238" stroke-width="1" opacity="0.4"/><path d="M76 314 L287 45" stroke="#7a5238" stroke-width="1.3" opacity="0.5"/><path d="M15 406 L184 67" stroke="#7a5238" stroke-width="1.6" opacity="0.5"/><path d="M64 305 L216 -52" stroke="#7a5238" stroke-width="1" opacity="0.5"/><path d="M19 336 L123 35" stroke="#7a5238" stroke-width="1.6" opacity="0.5"/><path d="M4 372 L230 54" stroke="#7a5238" stroke-width="1.6" opacity="0.4"/><path d="M110 316 L361 -27" stroke="#7a5238" stroke-width="1.3" opacity="0.3"/><path d="M107 330 L300 -75" stroke="#7a5238" stroke-width="1.6" opacity="0.3"/><path d="M84 347 L293 110" stroke="#7a5238" stroke-width="1" opacity="0.3"/><path d="M-20 361 L197 -30" stroke="#7a5238" stroke-width="1.3" opacity="0.4"/><path d="M36 409 L306 108" stroke="#7a5238" stroke-width="1.6" opacity="0.3"/><path d="M-17 358 L311 91" stroke="#7a5238" stroke-width="1" opacity="0.4"/><path d="M-2 410 L259 235" stroke="#7a5238" stroke-width="1.3" opacity="0.4"/><path d="M85 203 L4 11" stroke="#9a7050" stroke-width="1" opacity="0.25"/><path d="M96 253 L75 32" stroke="#9a7050" stroke-width="2" opacity="0.25"/><path d="M119 255 L60 75" stroke="#9a7050" stroke-width="1.5" opacity="0.25"/><path d="M62 238 L-9 19" stroke="#9a7050" stroke-width="1.5" opacity="0.25"/><path d="M160 205 L95 -17" stroke="#9a7050" stroke-width="2" opacity="0.25"/><path d="M139 255 L58 45" stroke="#9a7050" stroke-width="1" opacity="0.35"/><path d="M154 202 L109 57" stroke="#9a7050" stroke-width="2" opacity="0.35"/><path d="M98 201 L22 60" stroke="#9a7050" stroke-width="1" opacity="0.35"/><path d="M148 244 L68 27" stroke="#9a7050" stroke-width="2" opacity="0.35"/><path d="M104 250 L-5 45" stroke="#9a7050" stroke-width="1" opacity="0.35"/><path d="M190 65 L234 73" stroke="#8a6048" stroke-width="0.9" opacity="0.3"/><path d="M190 65 L227 90" stroke="#8a6048" stroke-width="0.9" opacity="0.3"/><path d="M190 65 L216 102" stroke="#8a6048" stroke-width="0.9" opacity="0.3"/><path d="M190 65 L191 110" stroke="#8a6048" stroke-width="0.9" opacity="0.3"/><path d="M190 65 L174 107" stroke="#8a6048" stroke-width="0.9" opacity="0.3"/><path d="M190 65 L156 94" stroke="#8a6048" stroke-width="0.9" opacity="0.3"/><path d="M190 65 L146 73" stroke="#8a6048" stroke-width="0.9" opacity="0.3"/><path d="M190 65 L145 62" stroke="#8a6048" stroke-width="0.9" opacity="0.3"/><path d="M190 65 L150 45" stroke="#8a6048" stroke-width="0.9" opacity="0.3"/><path d="M190 65 L165 27" stroke="#8a6048" stroke-width="0.9" opacity="0.3"/><path d="M190 65 L189 20" stroke="#8a6048" stroke-width="0.9" opacity="0.3"/><path d="M190 65 L203 22" stroke="#8a6048" stroke-width="0.9" opacity="0.3"/><path d="M190 65 L220 31" stroke="#8a6048" stroke-width="0.9" opacity="0.3"/><path d="M190 65 L234 57" stroke="#8a6048" stroke-width="0.9" opacity="0.3"/><circle cx="190" cy="65" r="4" fill="#8a6048" opacity="0.6"/><path d="M336 55 L375 63" stroke="#8a6048" stroke-width="0.9" opacity="0.3"/><path d="M336 55 L365 83" stroke="#8a6048" stroke-width="0.9" opacity="0.3"/><path d="M336 55 L338 95" stroke="#8a6048" stroke-width="0.9" opacity="0.3"/><path d="M336 55 L320 92" stroke="#8a6048" stroke-width="0.9" opacity="0.3"/><path d="M336 55 L300 72" stroke="#8a6048" stroke-width="0.9" opacity="0.3"/><path d="M336 55 L296 53" stroke="#8a6048" stroke-width="0.9" opacity="0.3"/><path d="M336 55 L307 28" stroke="#8a6048" stroke-width="0.9" opacity="0.3"/><path d="M336 55 L333 15" stroke="#8a6048" stroke-width="0.9" opacity="0.3"/><path d="M336 55 L358 22" stroke="#8a6048" stroke-width="0.9" opacity="0.3"/><path d="M336 55 L373 41" stroke="#8a6048" stroke-width="0.9" opacity="0.3"/><circle cx="336" cy="55" r="4" fill="#8a6048" opacity="0.6"/><path d="M192 105 L171 91" stroke="#a07858" stroke-width="0.8" opacity="0.3"/><path d="M219 151 L191 112" stroke="#a07858" stroke-width="0.8" opacity="0.3"/><path d="M328 50 L294 33" stroke="#a07858" stroke-width="0.8" opacity="0.3"/><path d="M166 39 L130 12" stroke="#a07858" stroke-width="0.8" opacity="0.3"/><path d="M219 57 L183 9" stroke="#a07858" stroke-width="0.8" opacity="0.3"/><path d="M209 13 L157 -6" stroke="#a07858" stroke-width="0.8" opacity="0.3"/><path d="M110 128 L86 106" stroke="#a07858" stroke-width="0.8" opacity="0.3"/><path d="M290 3 L255 -13" stroke="#a07858" stroke-width="0.8" opacity="0.3"/><path d="M106 149 L84 137" stroke="#a07858" stroke-width="0.8" opacity="0.3"/><path d="M111 113 L76 86" stroke="#a07858" stroke-width="0.8" opacity="0.3"/><path d="M257 145 L232 105" stroke="#a07858" stroke-width="0.8" opacity="0.3"/><path d="M148 86 L130 76" stroke="#a07858" stroke-width="0.8" opacity="0.3"/><path d="M213 129 L186 114" stroke="#a07858" stroke-width="0.8" opacity="0.3"/><path d="M183 126 L149 96" stroke="#a07858" stroke-width="0.8" opacity="0.3"/><path d="M281 71 L247 27" stroke="#a07858" stroke-width="0.8" opacity="0.3"/><path d="M121 168 L104 149" stroke="#a07858" stroke-width="0.8" opacity="0.3"/><path d="M209 113 L189 83" stroke="#a07858" stroke-width="0.8" opacity="0.3"/><path d="M237 158 L201 113" stroke="#a07858" stroke-width="0.8" opacity="0.3"/><path d="M211 117 L168 94" stroke="#a07858" stroke-width="0.8" opacity="0.3"/><path d="M296 115 L278 94" stroke="#a07858" stroke-width="0.8" opacity="0.3"/><path d="M316 176 L295 141" stroke="#a07858" stroke-width="0.8" opacity="0.3"/><path d="M290 58 L260 13" stroke="#a07858" stroke-width="0.8" opacity="0.3"/><path d="M184 15 L150 -11" stroke="#a07858" stroke-width="0.8" opacity="0.3"/><path d="M284 88 L236 69" stroke="#a07858" stroke-width="0.8" opacity="0.3"/><path d="M115 144 L86 129" stroke="#a07858" stroke-width="0.8" opacity="0.3"/><path d="M289 25 L253 7" stroke="#a07858" stroke-width="0.8" opacity="0.3"/><path d="M274 151 L235 109" stroke="#a07858" stroke-width="0.8" opacity="0.3"/><path d="M218 171 L192 159" stroke="#a07858" stroke-width="0.8" opacity="0.3"/><path d="M226 52 L197 18" stroke="#a07858" stroke-width="0.8" opacity="0.3"/><path d="M225 152 L201 130" stroke="#a07858" stroke-width="0.8" opacity="0.3"/></g>
<!-- dark strands -->
<g stroke="#3e2014" fill="none" filter="url(#sb)" stroke-linecap="round">
<path d="M23 124 L49 214" stroke-width="8" opacity="0.75"/><path d="M147 70 L132 130" stroke-width="5" opacity="0.6"/>
<path d="M60 240 L22 140" stroke-width="7" opacity="0.8"/><path d="M85 230 L68 120" stroke-width="5" opacity="0.6"/>
<path d="M180 160 L215 70" stroke-width="5" opacity="0.45"/><path d="M230 170 L310 115" stroke-width="5" opacity="0.4"/>
<path d="M255 215 L340 205" stroke-width="4" opacity="0.5"/><path d="M250 190 L340 165" stroke-width="3" opacity="0.35"/>
<path d="M10 40 L60 0" stroke-width="3" opacity="0.6"/>
</g>
<!-- right strands region -->
<g filter="url(#sb4)"><path d="M262 228 C290 224 320 226 345 228 L345 375 L240 375 C245 320 250 270 262 228 Z" fill="#6a4a36"/></g>
<g fill="none" filter="url(#sb1)"><path d="M282 372 Q284 314 292 256" stroke="#e0c0a0" stroke-width="1.5" opacity="0.7"/><path d="M271 372 Q267 303 271 233" stroke="#e0c0a0" stroke-width="1.5" opacity="0.5"/><path d="M248 372 Q254 305 262 238" stroke="#f0d8b8" stroke-width="0.8" opacity="0.5"/><path d="M254 372 Q249 314 244 257" stroke="#c89870" stroke-width="1.1" opacity="0.35"/><path d="M291 372 Q289 303 280 235" stroke="#c89870" stroke-width="1.5" opacity="0.5"/><path d="M256 372 Q251 294 253 216" stroke="#f0d8b8" stroke-width="0.8" opacity="0.35"/><path d="M264 372 Q258 309 256 246" stroke="#c89870" stroke-width="0.8" opacity="0.7"/><path d="M293 372 Q298 307 293 241" stroke="#f0d8b8" stroke-width="1.1" opacity="0.7"/><path d="M264 372 Q263 303 265 235" stroke="#c89870" stroke-width="1.5" opacity="0.7"/><path d="M260 372 Q258 308 252 243" stroke="#f0d8b8" stroke-width="0.8" opacity="0.7"/><path d="M304 372 Q313 299 315 225" stroke="#c89870" stroke-width="0.8" opacity="0.5"/><path d="M304 372 Q313 298 315 224" stroke="#e0c0a0" stroke-width="0.8" opacity="0.35"/><path d="M331 372 Q324 295 320 219" stroke="#c89870" stroke-width="1.1" opacity="0.7"/><path d="M322 372 Q318 303 310 233" stroke="#e0c0a0" stroke-width="0.8" opacity="0.35"/><path d="M300 372 Q296 312 296 252" stroke="#f0d8b8" stroke-width="1.5" opacity="0.7"/><path d="M319 372 Q315 309 319 246" stroke="#e0c0a0" stroke-width="1.1" opacity="0.35"/><path d="M247 372 Q256 307 255 243" stroke="#c89870" stroke-width="0.8" opacity="0.35"/><path d="M263 372 Q264 312 254 253" stroke="#f0d8b8" stroke-width="0.8" opacity="0.7"/><path d="M251 372 Q261 304 265 236" stroke="#c89870" stroke-width="1.1" opacity="0.5"/><path d="M286 372 Q283 298 282 224" stroke="#f0d8b8" stroke-width="1.5" opacity="0.35"/><path d="M327 372 Q325 304 317 235" stroke="#c89870" stroke-width="0.8" opacity="0.7"/><path d="M261 372 Q266 294 261 216" stroke="#f0d8b8" stroke-width="1.5" opacity="0.5"/><path d="M300 372 Q294 307 291 241" stroke="#c89870" stroke-width="1.1" opacity="0.35"/><path d="M317 372 Q320 312 326 252" stroke="#c89870" stroke-width="1.5" opacity="0.7"/><path d="M281 372 Q276 298 279 223" stroke="#e0c0a0" stroke-width="0.8" opacity="0.5"/><path d="M274 372 Q274 313 262 255" stroke="#f0d8b8" stroke-width="0.8" opacity="0.35"/><path d="M271 372 Q275 300 285 228" stroke="#c89870" stroke-width="1.5" opacity="0.35"/><path d="M297 372 Q297 316 293 260" stroke="#f0d8b8" stroke-width="0.8" opacity="0.5"/><path d="M340 372 Q336 307 326 243" stroke="#c89870" stroke-width="1.1" opacity="0.5"/><path d="M294 372 Q292 308 302 244" stroke="#c89870" stroke-width="1.1" opacity="0.5"/><path d="M293 340 L359 242" stroke="#d8b898" stroke-width="0.9" opacity="0.4"/><path d="M270 372 L342 283" stroke="#d8b898" stroke-width="0.9" opacity="0.4"/><path d="M235 343 L313 300" stroke="#d8b898" stroke-width="0.9" opacity="0.4"/><path d="M295 312 L359 261" stroke="#d8b898" stroke-width="0.9" opacity="0.4"/><path d="M265 344 L308 247" stroke="#d8b898" stroke-width="0.9" opacity="0.4"/><path d="M259 338 L329 276" stroke="#d8b898" stroke-width="0.9" opacity="0.4"/><path d="M250 347 L318 290" stroke="#d8b898" stroke-width="0.9" opacity="0.4"/><path d="M280 321 L321 267" stroke="#d8b898" stroke-width="0.9" opacity="0.4"/><path d="M233 311 L311 248" stroke="#d8b898" stroke-width="0.9" opacity="0.4"/><path d="M293 354 L335 255" stroke="#d8b898" stroke-width="0.9" opacity="0.4"/><path d="M296 305 L381 240" stroke="#d8b898" stroke-width="0.9" opacity="0.4"/><path d="M263 370 L316 299" stroke="#d8b898" stroke-width="0.9" opacity="0.4"/><path d="M296 352 L359 253" stroke="#d8b898" stroke-width="0.9" opacity="0.4"/><path d="M287 343 L333 266" stroke="#d8b898" stroke-width="0.9" opacity="0.4"/></g>
<!-- silhouette -->
<g filter="url(#sb4)">
<path d="M-10 158 C10 170 26 188 36 203 L50 198 L78 152 L90 86 L98 150 L110 150 L126 96 L138 88 L142 146 L182 150 L195 128 L194 166 L231 165 L256 176 L272 204 L266 232 L258 250 L262 290 L250 330 L244 375 L-10 375 Z" fill="#2c1711"/>
</g>
<g filter="url(#sb)" fill="none" stroke-linecap="round">
<path d="M62 225 L18 140" stroke="#f0c060" stroke-width="5" opacity="0.55"/>
<path d="M82 212 L50 118" stroke="#f4d080" stroke-width="4" opacity="0.5"/>
<path d="M48 238 L10 178" stroke="#d89850" stroke-width="3.5" opacity="0.45"/>
<path d="M102 205 L84 125" stroke="#e8c070" stroke-width="3" opacity="0.4"/>
</g>
</svg>
<div class="a" style="left:60px;top:200px;width:200px;height:200px;background:radial-gradient(ellipse at 50% 60%,rgba(110,75,60,0.3),rgba(110,75,60,0) 65%)"></div>
<div class="a" style="left:-70px;top:170px;width:150px;height:230px;background:radial-gradient(ellipse at 40% 50%,rgba(100,35,25,0.5),rgba(100,35,25,0) 70%)"></div>
</div>
<!-- DROPDOWN -->
<div id="dd" class="a" style="left:1009px;top:436px;width:263px;height:532px;background:#fff;border:1px solid #1473e6;border-top:none;box-shadow:2px 2px 3px rgba(0,0,0,0.35)"></div>
<div class="a" style="left:1031px;top:439.80px;font-size:15px;line-height:18px;color:#1b1b1b;white-space:nowrap;">Original Size</div>
<div class="a" style="left:1031px;top:462.80px;font-size:15px;line-height:18px;color:#1b1b1b;white-space:nowrap;">Auto Resolution...</div>
<div class="a" style="left:1031px;top:508.80px;font-size:15px;line-height:18px;color:#1b1b1b;white-space:nowrap;">960 x 640 px 144 ppi</div>
<div class="a" style="left:1031px;top:532.30px;font-size:15px;line-height:18px;color:#1b1b1b;white-space:nowrap;">1024 x 768 px 72 ppi</div>
<div class="a" style="left:1031px;top:554.80px;font-size:15px;line-height:18px;color:#1b1b1b;white-space:nowrap;">1136 x 640 px 144 ppi</div>
<div class="a" style="left:1031px;top:577.80px;font-size:15px;line-height:18px;color:#1b1b1b;white-space:nowrap;">1366 x 768 px 72 ppi</div>
<div class="a" style="left:1031px;top:647.80px;font-size:15px;line-height:18px;color:#1b1b1b;white-space:nowrap;">A6 105 x 148 mm 300 dpi</div>
<div class="a" style="left:1031px;top:669.80px;font-size:15px;line-height:18px;color:#1b1b1b;white-space:nowrap;">Legal 8.5 x 14 in 300 dpi</div>
<div class="a" style="left:1031px;top:692.80px;font-size:15px;line-height:18px;color:#1b1b1b;white-space:nowrap;">Letter 8.5 x 11 in 300 dpi</div>
<div class="a" style="left:1031px;top:738.30px;font-size:15px;line-height:18px;color:#1b1b1b;white-space:nowrap;">4 x 6 in 300 dpi</div>
<div class="a" style="left:1031px;top:762.30px;font-size:15px;line-height:18px;color:#1b1b1b;white-space:nowrap;">5 x 7 in 300 dpi</div>
<div class="a" style="left:1031px;top:784.30px;font-size:15px;line-height:18px;color:#1b1b1b;white-space:nowrap;">8 x 10 in 300 dpi</div>
<div class="a" style="left:1031px;top:807.30px;font-size:15px;line-height:18px;color:#1b1b1b;white-space:nowrap;">11 x 14 in 300 dpi</div>
<div class="a" style="left:1031px;top:853.30px;font-size:15px;line-height:18px;color:#1b1b1b;white-space:nowrap;">Load Preset...</div>
<div class="a" style="left:1031px;top:877.30px;font-size:15px;line-height:18px;color:#1b1b1b;white-space:nowrap;">Save Preset...</div>
<div class="a" style="left:1031px;top:899.80px;font-size:15px;line-height:18px;color:#8c8c8c;white-space:nowrap;">Delete Preset...</div>
<div class="a" style="left:1031px;top:946.80px;font-size:15px;line-height:18px;color:#1b1b1b;white-space:nowrap;">Custom</div>
<div class="a" style="left:1010px;top:494px;width:260px;height:2px;background:#b9b9b9"></div>
<div class="a" style="left:1010px;top:609px;width:260px;height:2px;background:#b9b9b9"></div>
<div class="a" style="left:1010px;top:724px;width:260px;height:2px;background:#b9b9b9"></div>
<div class="a" style="left:1010px;top:839px;width:260px;height:2px;background:#b9b9b9"></div>
<div class="a" style="left:1010px;top:932px;width:260px;height:1px;background:#b0b0b0"></div>
<div class="a" style="left:1010px;top:623px;width:261px;height:21px;background:#0078d7;outline:1px dotted #000;outline-offset:-1px"></div>
<div class="a" style="left:1031px;top:623.80px;font-size:15px;line-height:18px;color:#ffffff;white-space:nowrap;">A4 210 x 297 mm 300 dpi</div>
<svg style="left:1013px;top:949px" width="11" height="10" viewBox="0 0 11 10"><path d="M1 5 L4 8.2 L9.8 1" stroke="#111" stroke-width="2.6" fill="none"/></svg>

</div>
</body></html>
